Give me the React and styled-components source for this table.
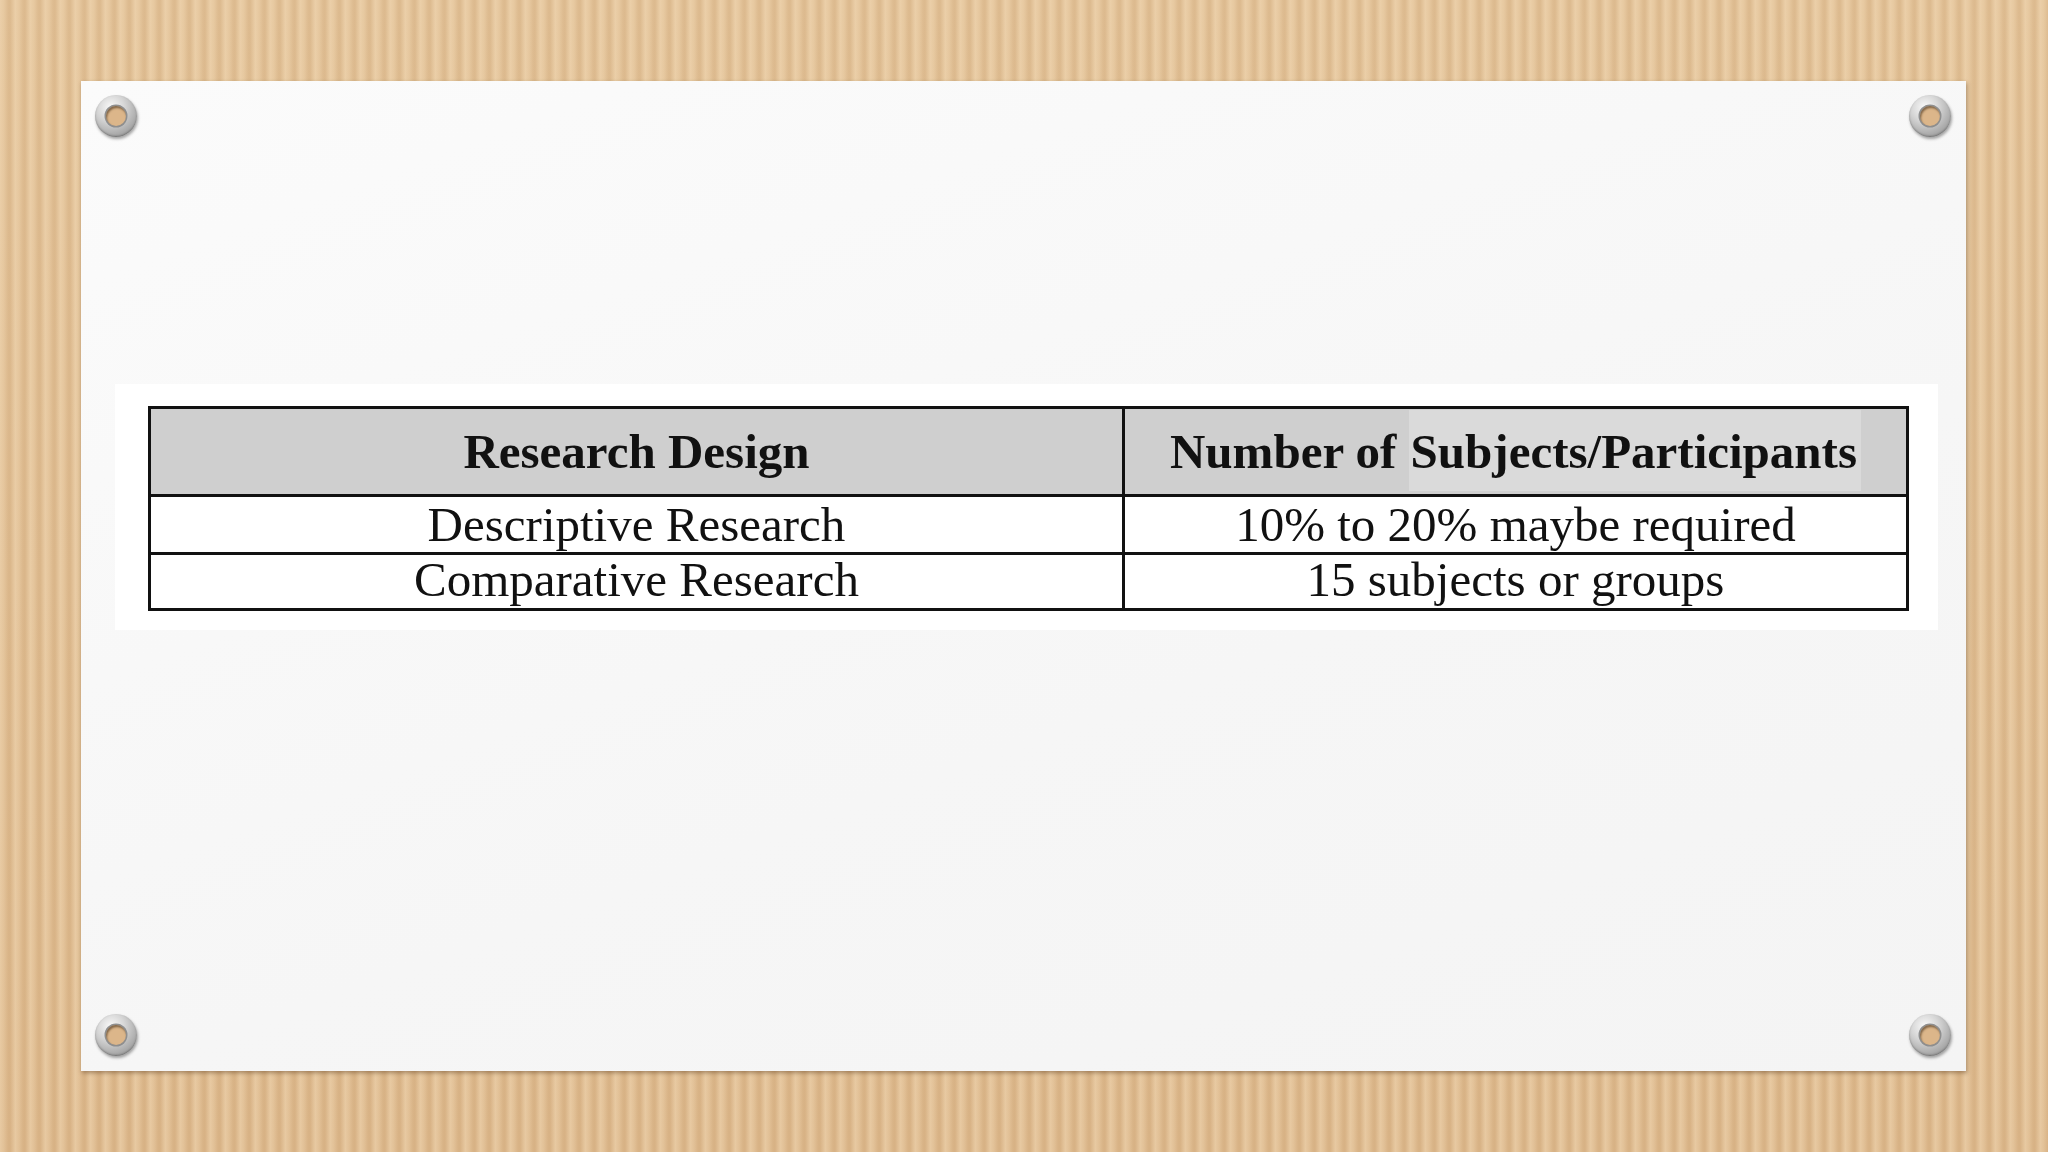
import React from "react";
import styled, { createGlobalStyle } from "styled-components";

const Global = createGlobalStyle`
  html, body { margin: 0; padding: 0; }
  body { font-family: "Liberation Serif", "Times New Roman", serif; }
`;

const Board = styled.div`
  width: 2048px;
  height: 1152px;
  box-sizing: border-box;
  padding: 81px 0 0 81px;
  overflow: hidden;
  background-color: #e0bd92;
  background-image:
    repeating-linear-gradient(
      90deg,
      rgba(245, 222, 188, 0.45) 0px,
      rgba(245, 222, 188, 0.2) 4px,
      rgba(190, 145, 95, 0.14) 8px,
      rgba(190, 145, 95, 0.18) 10px,
      rgba(245, 222, 188, 0.38) 15px
    ),
    linear-gradient(180deg, #e3c399 0%, #ddb98d 100%);
`;

const Paper = styled.div`
  position: relative;
  width: 1885px;
  height: 990px;
  box-sizing: border-box;
  background: linear-gradient(160deg, #fbfbfb 0%, #f6f6f6 60%, #f4f4f4 100%);
  box-shadow: 1px 2px 4px rgba(90, 60, 30, 0.45);
  padding: 303px 0 0 34px;
`;

const Grommet = styled.div`
  position: absolute;
  width: 42px;
  height: 42px;
  border-radius: 50%;
  ${(p) => (p.$top ? "top: 14px;" : "bottom: 15px;")}
  ${(p) => (p.$left ? "left: 14px;" : "right: 15px;")}
  background: radial-gradient(circle at 38% 30%, #fafafa 0%, #d6d6d6 35%, #a9a9a9 70%, #7c7c7c 100%);
  box-shadow: 1px 2px 3px rgba(0, 0, 0, 0.35), inset 0 -1px 2px rgba(0, 0, 0, 0.3);
  display: flex;
  align-items: center;
  justify-content: center;

  &::after {
    content: "";
    width: 20px;
    height: 20px;
    border-radius: 50%;
    background: #dcb68a;
    box-shadow: inset 1px 2px 2px rgba(60, 40, 20, 0.55), 0 0 0 1.5px #8e8e8e;
  }
`;

const Panel = styled.div`
  width: 1823px;
  height: 246px;
  box-sizing: border-box;
  background: #ffffff;
  padding: 22px 0 0 33px;
`;

const Table = styled.table`
  width: 1761px;
  border-collapse: collapse;
  table-layout: fixed;
  color: #111;
`;

const Col = styled.col`
  width: ${(p) => p.$pct}%;
`;

const HeadCell = styled.th`
  height: 85px;
  padding: 0;
  border: 3px solid #111;
  background: #cfcfcf;
  font-family: "Liberation Serif", "Times New Roman", serif;
  font-weight: 700;
  font-size: 49px;
  line-height: 1;
  text-align: center;
  vertical-align: middle;
`;

const Cell = styled.td`
  height: ${(p) => p.$h}px;
  padding: 0 0 ${(p) => p.$lift || 0}px;
  border: 3px solid #111;
  background: #ffffff;
  font-family: "Liberation Serif", "Times New Roman", serif;
  font-size: 49px;
  line-height: 1;
  text-align: center;
  vertical-align: middle;
`;

const Highlight = styled.span`
  background: #dadada;
  padding: 14px 4px 12px 2px;
`;

export default function App() {
  return (
    <>
      <Global />
      <Board>
        <Paper>
          <Grommet $top $left />
          <Grommet $top />
          <Grommet $left />
          <Grommet />
          <Panel>
            <Table>
              <colgroup>
                <Col $pct={55.4} />
                <Col $pct={44.6} />
              </colgroup>
              <thead>
                <tr>
                  <HeadCell>Research Design</HeadCell>
                  <HeadCell>
                    Number of <Highlight>Subjects/Participants</Highlight>
                  </HeadCell>
                </tr>
              </thead>
              <tbody>
                <tr>
                  <Cell $h={55}>Descriptive Research</Cell>
                  <Cell $h={55}>10% to 20% maybe required</Cell>
                </tr>
                <tr>
                  <Cell $h={48} $lift={4}>Comparative Research</Cell>
                  <Cell $h={48} $lift={4}>15 subjects or groups</Cell>
                </tr>
              </tbody>
            </Table>
          </Panel>
        </Paper>
      </Board>
    </>
  );
}
